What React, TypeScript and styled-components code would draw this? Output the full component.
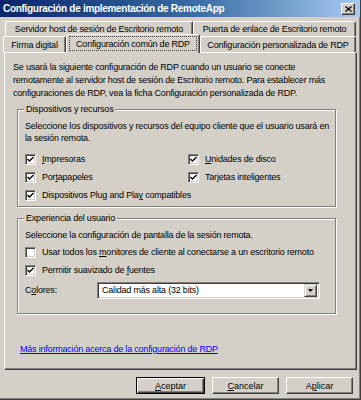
import React from "react";
import styled, { createGlobalStyle } from "styled-components";

const GlobalStyle = createGlobalStyle`
  html, body {
    margin: 0;
    padding: 0;
    background: #d4d0c8;
  }
  body {
    font-family: "Liberation Sans", Arial, sans-serif;
    font-size: 9px;
    letter-spacing: -0.2px;
    color: #000;
  }
`;

const Window = styled.div`
  width: 361px;
  height: 400px;
  box-sizing: border-box;
  background: #d4d0c8;
  border-right: 1px solid #404040;
  border-bottom: 1px solid #404040;
  box-shadow: inset -1px -1px 0 #808080;
  display: flex;
  flex-direction: column;
  overflow: hidden;
`;

const TitleBar = styled.div`
  height: 17px;
  flex: none;
  display: flex;
  align-items: center;
  justify-content: space-between;
  padding: 0 5px 0 3px;
  background: linear-gradient(to right, #0a246a 0%, #3a6ea5 55%, #a6caf0 100%);
`;

const Title = styled.span`
  color: #fff;
  font-weight: bold;
  font-size: 10px;
  letter-spacing: -0.3px;
  white-space: nowrap;
`;

const CloseButton = styled.div`
  width: 14px;
  height: 12px;
  box-sizing: border-box;
  background: #d4d0c8;
  border: 1px solid;
  border-color: #fff #404040 #404040 #fff;
  box-shadow: inset -1px -1px 0 #808080;
  display: flex;
  align-items: center;
  justify-content: center;
`;

const TabRow = styled.div<{ $front?: boolean }>`
  display: flex;
  align-items: flex-end;
  height: ${p => (p.$front ? 18 : 15)}px;
  margin-top: ${p => (p.$front ? -2 : 4)}px;
  padding-left: ${p => (p.$front ? 3 : 5)}px;
  position: relative;
  z-index: ${p => (p.$front ? 2 : 1)};
`;

const Tab = styled.div<{ $w: number; $active?: boolean }>`
  width: ${p => p.$w}px;
  height: 15px;
  box-sizing: border-box;
  background: #d4d0c8;
  border-top: 1px solid #fff;
  border-left: 1px solid #fff;
  border-right: 1px solid #404040;
  border-radius: 2px 2px 0 0;
  box-shadow: inset -1px 0 0 #808080;
  display: flex;
  align-items: center;
  justify-content: center;
  white-space: nowrap;
  margin-bottom: ${p => (p.$active ? -1 : 0)}px;
  position: relative;
  padding: ${p => (p.$active ? "1px 2px 2px" : "0")};
`;

const FrontTab = styled(Tab)`
  height: ${p => (p.$active ? 19 : 16)}px;
`;

const FocusRect = styled.span`
  flex: 1;
  align-self: stretch;
  display: flex;
  align-items: center;
  justify-content: center;
  border: 1px dotted #404040;
`;

const Panel = styled.div`
  margin-left: 4px;
  width: 353px;
  height: 318px;
  flex: none;
  box-sizing: border-box;
  border: 1px solid;
  border-color: #fff #404040 #404040 #fff;
  box-shadow: inset -1px -1px 0 #808080;
  padding: 8px 8px 0 8px;
`;

const Intro = styled.p`
  margin: 0;
  line-height: 13px;
  white-space: nowrap;
`;

const Group = styled.div<{ $top: number; $bottom: number }>`
  position: relative;
  margin: ${p => p.$top}px 0 0 4px;
  width: 319px;
  box-sizing: border-box;
  border: 1px solid #808080;
  box-shadow: 1px 1px 0 #fff, inset 1px 1px 0 #fff;
  padding: 10px 7px ${p => p.$bottom}px 7px;
`;

const Legend = styled.span`
  position: absolute;
  top: -7px;
  left: 6px;
  padding: 0 2px;
  line-height: 13px;
  background: #d4d0c8;
  white-space: nowrap;
`;

const GroupText = styled.div`
  line-height: 12px;
  white-space: nowrap;
`;

const CheckGrid = styled.div`
  margin-top: 6px;
  display: grid;
  grid-template-columns: 163px 1fr;
  grid-auto-rows: 18px;
`;

const CheckList = styled.div`
  margin-top: 2px;
  display: flex;
  flex-direction: column;
`;

const CheckRow = styled.label<{ $span?: boolean }>`
  display: flex;
  align-items: center;
  gap: 6px;
  height: 18px;
  white-space: nowrap;
  grid-column: ${p => (p.$span ? "1 / span 2" : "auto")};
`;

const Box = styled.span`
  width: 11px;
  height: 11px;
  flex: none;
  box-sizing: border-box;
  background: #fff;
  border: 1px solid;
  border-color: #808080 #fff #fff #808080;
  box-shadow: inset 1px 1px 0 #404040, inset -1px -1px 0 #d4d0c8;
  display: flex;
  align-items: center;
  justify-content: center;
`;

const SelectRow = styled.div`
  margin-top: 2px;
  height: 18px;
  display: flex;
  align-items: center;
`;

const SelectLabel = styled.span`
  width: 72px;
  flex: none;
`;

const Select = styled.div`
  width: 223px;
  height: 17px;
  box-sizing: border-box;
  background: #fff;
  border: 1px solid;
  border-color: #808080 #fff #fff #808080;
  box-shadow: inset 1px 1px 0 #404040, inset -1px -1px 0 #d4d0c8;
  display: flex;
  align-items: center;
  padding: 0 2px 0 4px;
`;

const SelectValue = styled.span`
  flex: 1;
  white-space: nowrap;
`;

const ArrowButton = styled.span`
  width: 13px;
  height: 13px;
  box-sizing: border-box;
  background: #d4d0c8;
  border: 1px solid;
  border-color: #d4d0c8 #404040 #404040 #d4d0c8;
  box-shadow: inset 1px 1px 0 #fff, inset -1px -1px 0 #808080;
  display: flex;
  align-items: center;
  justify-content: center;
`;

const MoreLink = styled.a`
  display: block;
  margin: 29px 0 0 7px;
  line-height: 12px;
  color: #0000ff;
  text-decoration: underline;
  white-space: nowrap;
  cursor: pointer;
`;

const ButtonBar = styled.div`
  margin-top: 7px;
  padding-right: 7px;
  display: flex;
  justify-content: flex-end;
  gap: 7px;
`;

const Button = styled.button<{ $w: number; $default?: boolean }>`
  width: ${p => p.$w}px;
  height: 17px;
  box-sizing: border-box;
  padding: 0;
  font: inherit;
  color: #000;
  background: #d4d0c8;
  border: 1px solid;
  border-color: ${p =>
    p.$default ? "#000" : "#fff #404040 #404040 #fff"};
  box-shadow: ${p =>
    p.$default
      ? "inset 1px 1px 0 #fff, inset -1px -1px 0 #404040, inset -2px -2px 0 #808080"
      : "inset -1px -1px 0 #808080"};
`;

const Check = () => (
  <svg width="7" height="7" viewBox="0 0 7 7">
    <path d="M0.5 3 L2.5 5 L6.5 1" fill="none" stroke="#000" strokeWidth="1.4" />
  </svg>
);

const CheckItem: React.FC<{ checked?: boolean; span?: boolean; children: React.ReactNode }> = ({
  checked,
  span,
  children
}) => (
  <CheckRow $span={span}>
    <Box>{checked && <Check />}</Box>
    <span>{children}</span>
  </CheckRow>
);

const App: React.FC = () => {
  return (
    <>
      <GlobalStyle />
      <Window>
        <TitleBar>
          <Title>Configuración de implementación de RemoteApp</Title>
          <CloseButton>
            <svg width="7" height="6" viewBox="0 0 7 6">
              <path d="M0.5 0.5 L6.5 5.5 M6.5 0.5 L0.5 5.5" stroke="#000" strokeWidth="1.3" />
            </svg>
          </CloseButton>
        </TitleBar>

        <TabRow>
          <Tab $w={188}>Servidor host de sesión de Escritorio remoto</Tab>
          <Tab $w={163}>Puerta de enlace de Escritorio remoto</Tab>
        </TabRow>
        <TabRow $front>
          <FrontTab $w={63}>Firma digital</FrontTab>
          <FrontTab $w={134} $active>
            <FocusRect>Configuración común de RDP</FocusRect>
          </FrontTab>
          <FrontTab $w={156}>Configuración personalizada de RDP</FrontTab>
        </TabRow>

        <Panel>
          <Intro>
            Se usará la siguiente configuración de RDP cuando un usuario se conecte
            <br />
            remotamente al servidor host de sesión de Escritorio remoto. Para establecer más
            <br />
            configuraciones de RDP, vea la ficha Configuración personalizada de RDP.
          </Intro>

          <Group $top={9} $bottom={2}>
            <Legend>Dispositivos y recursos</Legend>
            <GroupText>
              Seleccione los dispositivos y recursos del equipo cliente que el usuario usará en
              <br />
              la sesión remota.
            </GroupText>
            <CheckGrid>
              <CheckItem checked>
                <u>I</u>mpresoras
              </CheckItem>
              <CheckItem checked>
                <u>U</u>nidades de disco
              </CheckItem>
              <CheckItem checked>
                Por<u>t</u>apapeles
              </CheckItem>
              <CheckItem checked>
                Tar<u>j</u>etas inteligentes
              </CheckItem>
              <CheckItem checked span>
                Dispositivos Plug and Pla<u>y</u> compatibles
              </CheckItem>
            </CheckGrid>
          </Group>

          <Group $top={11} $bottom={14}>
            <Legend>Experiencia del usuario</Legend>
            <GroupText>Seleccione la configuración de pantalla de la sesión remota.</GroupText>
            <CheckList>
              <CheckItem>
                Usar todos los <u>m</u>onitores de cliente al conectarse a un escritorio remoto
              </CheckItem>
              <CheckItem checked>
                Permitir suavizado de <u>f</u>uentes
              </CheckItem>
            </CheckList>
            <SelectRow>
              <SelectLabel>
                C<u>o</u>lores:
              </SelectLabel>
              <Select>
                <SelectValue>Calidad más alta (32 bits)</SelectValue>
                <ArrowButton>
                  <svg width="5" height="3" viewBox="0 0 5 3">
                    <path d="M0 0 H5 L2.5 3 Z" fill="#000" />
                  </svg>
                </ArrowButton>
              </Select>
            </SelectRow>
          </Group>

          <MoreLink>Más información acerca de la configuración de RDP</MoreLink>
        </Panel>

        <ButtonBar>
          <Button $w={69} $default>
            <u>A</u>ceptar
          </Button>
          <Button $w={67}>
            <u>C</u>ancelar
          </Button>
          <Button $w={67}>
            A<u>p</u>licar
          </Button>
        </ButtonBar>
      </Window>
    </>
  );
};

export default App;
